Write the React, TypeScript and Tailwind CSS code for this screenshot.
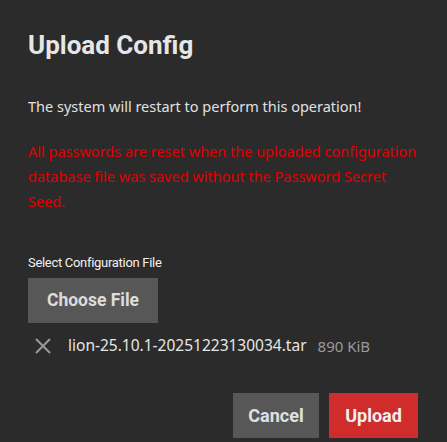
import React from "react";

export default function App() {
  return (
    <div className="w-[447px] h-[442px] overflow-hidden bg-[#2b2b2b] text-[#e0e0e0]" style={{ fontFamily: "Roboto, sans-serif" }}>
      <div className="px-[28px] pt-[30px]">
        <h1 className="text-[26px] leading-[30px] font-bold text-[#e6e6e6]">Upload Config</h1>
        <p className="mt-[35px] text-[14.5px] leading-[22px] text-[#e0e0e0] font-['Noto_Sans',sans-serif] whitespace-nowrap">
          The system will restart to perform this operation!
        </p>
        <p className="mt-[22px] text-[14.5px] leading-[25px] text-[#e10000] font-['Noto_Sans',sans-serif] whitespace-nowrap">
          All passwords are reset when the uploaded configuration
          <br />
          database file was saved without the Password Secret
          <br />
          Seed.
        </p>
        <div className="mt-[41px] text-[13px] leading-[16px] text-[#f0f0f0] tracking-[-0.3px]">Select Configuration File</div>
        <button className="mt-[7px] w-[130px] h-[45px] bg-[#575757] text-[17.5px] font-bold text-[#dcdcdc]">Choose File</button>
        <div className="mt-[12px] flex items-center h-[22px]">
          <svg width="18" height="18" viewBox="0 0 18 18" className="ml-[6px]">
            <path d="M2 2 L16 16 M16 2 L2 16" stroke="#9a9a9a" strokeWidth="2" />
          </svg>
          <span className="ml-[16px] text-[15.5px] text-[#e6e6e6] font-['Noto_Sans',sans-serif]">lion-25.10.1-20251223130034.tar</span>
          <span className="ml-[11px] text-[15px] text-[#9a9a9a] font-['Noto_Sans',sans-serif]">890 KiB</span>
        </div>
        <div className="mt-[36px] flex justify-end gap-[10px] pr-[1px]">
          <button className="w-[86px] h-[45px] bg-[#575757] text-[18px] font-bold text-[#e0e0e0]">Cancel</button>
          <button className="w-[89px] h-[45px] bg-[#d02c2c] text-[18px] font-bold text-[#f0f0f0]">Upload</button>
        </div>
      </div>
    </div>
  );
}
